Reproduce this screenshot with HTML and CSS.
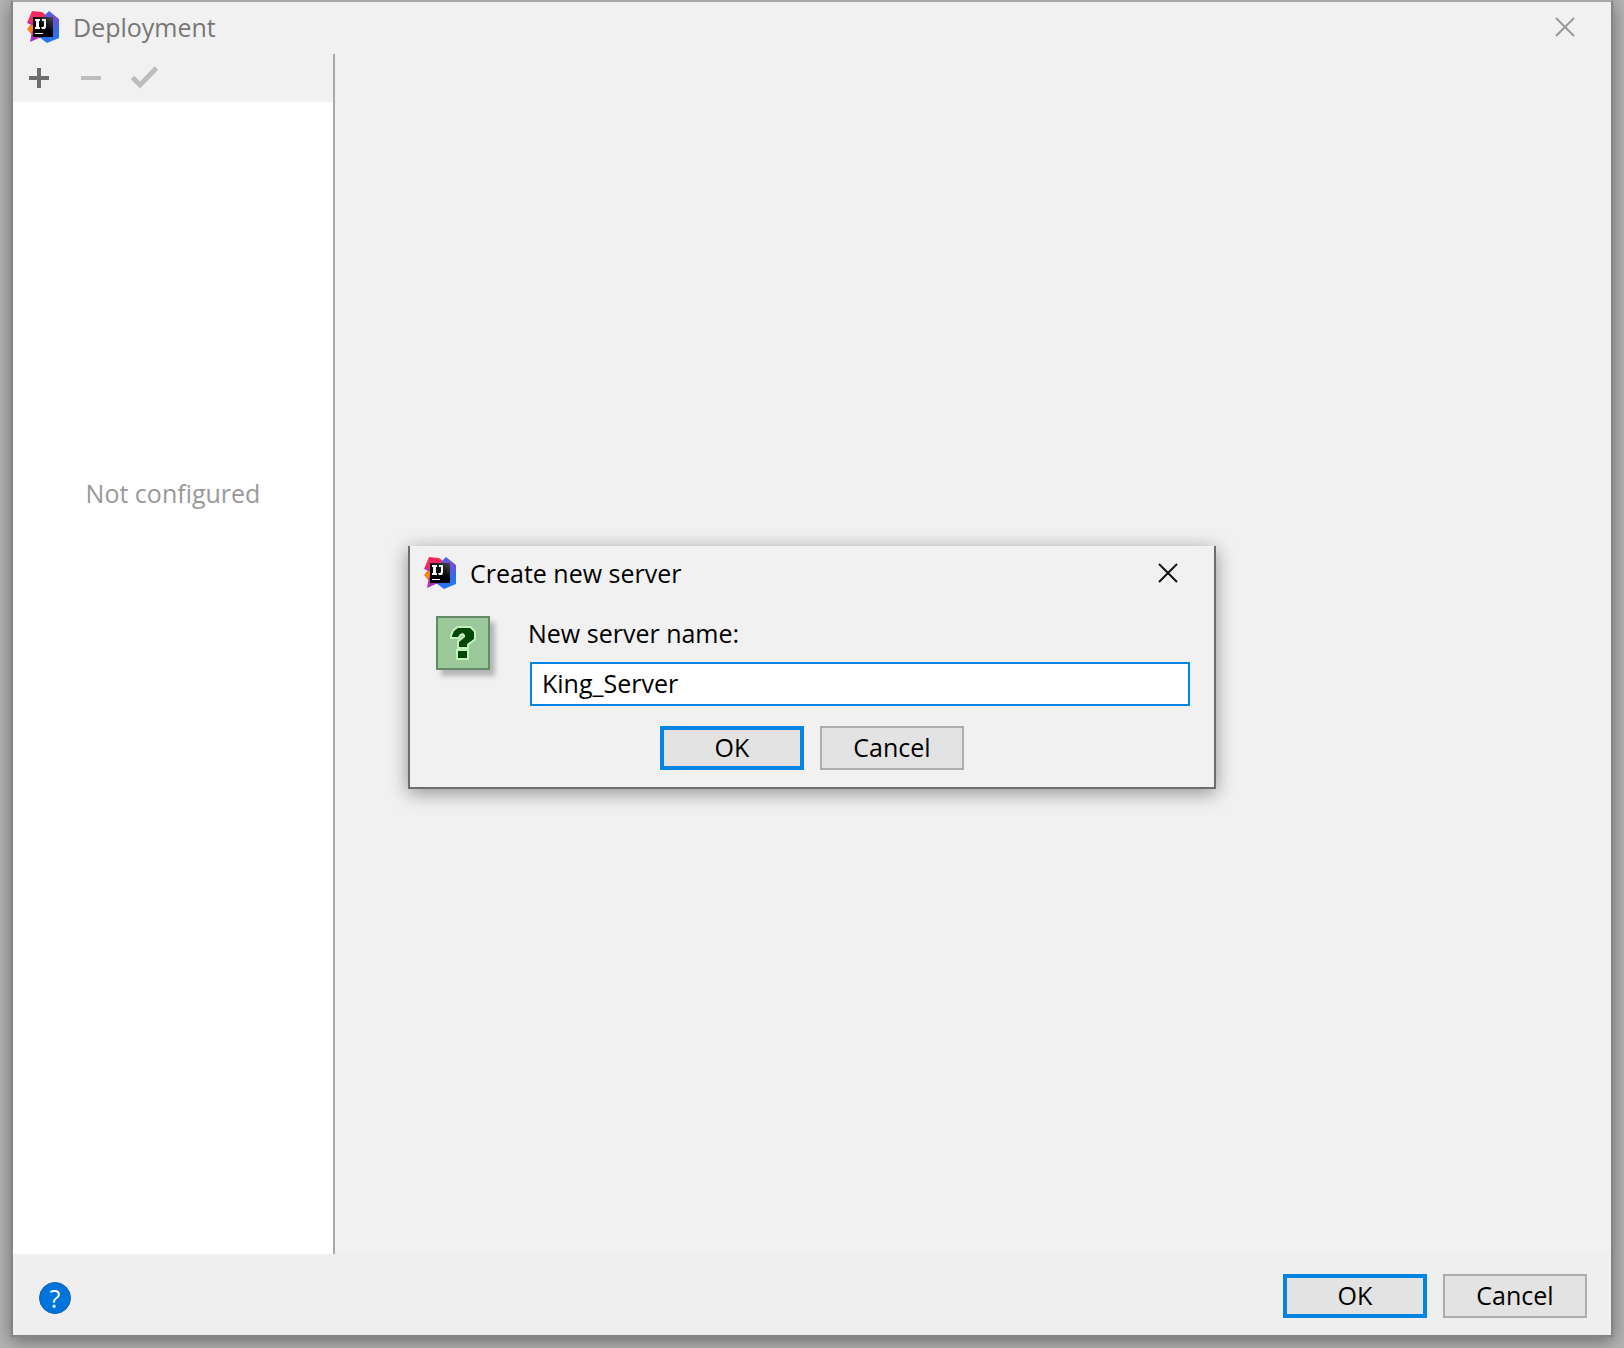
FILE: index.html
```html
<!DOCTYPE html>
<html lang="en">
<head>
<meta charset="utf-8">
<meta name="viewport" content="width=device-width, initial-scale=1">
<title>Deployment</title>
<link rel="stylesheet" href="styles.css">
</head>
<body>
<svg class="defs" aria-hidden="true">
  <defs>
    <linearGradient id="red" x1="0" y1="0" x2="0" y2="1"><stop offset="0" stop-color="#fe2857"/><stop offset="0.65" stop-color="#f0286a"/><stop offset="1" stop-color="#9a35c8"/></linearGradient>
    <linearGradient id="blue" x1="0.2" y1="0" x2="0.5" y2="1"><stop offset="0" stop-color="#2f6cf0"/><stop offset="0.35" stop-color="#7a4cd8"/><stop offset="0.7" stop-color="#3767ea"/><stop offset="1" stop-color="#1f7cf0"/></linearGradient>
    <linearGradient id="purple" x1="0" y1="1" x2="1" y2="0.4"><stop offset="0" stop-color="#9039d8"/><stop offset="0.5" stop-color="#c02fa0"/><stop offset="1" stop-color="#fe2857"/></linearGradient>
    <linearGradient id="black" x1="1" y1="0" x2="0.6" y2="0.6"><stop offset="0" stop-color="#4a4a4a"/><stop offset="1" stop-color="#000"/></linearGradient>
    <symbol id="logo" viewBox="0 0 32 32">
      <path d="M0 18 4 13 8 16 7 24 4 23Z" fill="#fc801d"/>
      <path d="M5 0 15 1 20 5 19 9 7 15 0 12Z" fill="url(#red)"/>
      <path d="M5 20 16 24 20 27 12 27 3 31Z" fill="url(#purple)"/>
      <path d="M22 0 32 8 32 27 20 32 12 26 18 4Z" fill="url(#blue)"/>
      <path d="M6 6h20v20H6z" fill="url(#black)"/>
      <path d="M8 8h5v2h-1v6h1v2H8v-2h1v-6H8zM15 8h4v8l-1 2h-3l-1-2h2l1-1v-5h-2zM8 22h8v1H8z" fill="#fff"/>
    </symbol>
  </defs>
</svg>
<main class="window">
  <header class="titlebar">
    <svg class="logo" aria-hidden="true"><use href="#logo"/></svg>
    <h1 class="title">Deployment</h1>
    <button class="close" type="button" aria-label="Close"><svg viewBox="0 0 20 20"><path d="M1 1 19 19M19 1 1 19"/></svg></button>
  </header>
  <div class="content">
    <aside class="sidebar">
      <div class="toolbar">
        <button class="tool add" type="button" aria-label="Add"><svg viewBox="0 0 28 28"><path d="M4 14h20M14 4v20"/></svg></button>
        <button class="tool" type="button" aria-label="Remove" disabled><svg viewBox="0 0 28 28"><path d="M4 14h20"/></svg></button>
        <button class="tool" type="button" aria-label="Use as default" disabled><svg viewBox="0 0 28 28"><path d="M2.500 13.500 10 21 26.500 4" stroke-width="5"/></svg></button>
      </div>
      <div class="servers"><p class="empty">Not configured</p></div>
    </aside>
    <section class="details" aria-label="Server settings"></section>
  </div>
  <footer class="footer">
    <button class="help" type="button" aria-label="Help">?</button>
    <div class="actions">
      <button class="button primary" type="button">OK</button>
      <button class="button" type="button">Cancel</button>
    </div>
  </footer>
</main>
<form class="dialog" role="dialog" aria-labelledby="dialog-title">
  <header class="titlebar">
    <svg class="logo" aria-hidden="true"><use href="#logo"/></svg>
    <h2 class="title" id="dialog-title">Create new server</h2>
    <button class="close" type="button" aria-label="Close"><svg viewBox="0 0 20 20"><path d="M1 1 19 19M19 1 1 19"/></svg></button>
  </header>
  <div class="prompt">
    <svg class="question" viewBox="0 0 54 54" aria-hidden="true">
      <path d="M1 1h52v52H1z" fill="#9bc898" stroke="#668a68" stroke-width="2"/>
      <path class="mark" d="M16 20 18 15 22 12H34L38 16V23L31 28V31H23V26L29 21V19L27 17 24 18 22 21H16ZM22 35h9v7h-9z"/>
    </svg>
    <div class="field">
      <label for="server-name">New server name:</label>
      <input id="server-name" type="text" value="King_Server">
    </div>
  </div>
  <div class="actions centered">
    <button class="button primary" type="submit">OK</button>
    <button class="button" type="button">Cancel</button>
  </div>
</form>
</body>
</html>
```
FILE: styles.css
```css
* { box-sizing: border-box; }
body {
  margin: 0;
  min-height: 100vh;
  display: flex;
  padding: 0 11px 11px;
  background: #b3b3b3;
  color: #000;
  font: 25px/34px "Open Sans", "Noto Sans", sans-serif;
}
button, input { font: inherit; color: inherit; }
button { margin: 0; padding: 0; }
svg { display: block; }
.defs { position: absolute; width: 0; height: 0; }
.window {
  flex: 1;
  display: flex;
  flex-direction: column;
  border: 2px solid #858585;
  border-top-color: #a8a8a8;
  background: #f1f1f1;
  box-shadow: 0 4px 16px rgba(0, 0, 0, 0.4);
}
.titlebar {
  display: flex;
  align-items: center;
  height: 52px;
  padding: 0 36px 0 14px;
}
.window .titlebar { padding-bottom: 2px; }
.dialog .titlebar { padding-top: 2px; }
.logo { width: 32px; height: 32px; }
.title { flex: 1; margin: 0 0 0 14px; font-size: 25px; font-weight: 400; }
.window .title { color: #777; }
.close { border: 0; background: none; }
.close svg { width: 20px; height: 20px; fill: none; stroke: #111; stroke-width: 2; }
.window .close svg { stroke: #999; }
.content { flex: 1; display: flex; }
.sidebar { width: 322px; display: flex; flex-direction: column; border-right: 2px solid #a9a9a9; }
.toolbar { display: flex; gap: 24px; height: 48px; padding: 10px 12px; }
.tool { border: 0; background: none; color: #bdbdbd; }
.tool svg { width: 28px; height: 28px; fill: none; stroke: currentColor; stroke-width: 4; }
.tool:last-child { margin-left: 1px; }
.add { color: #6e6e6e; }
.servers { flex: 1; padding-top: 374px; background: #fff; }
.empty { margin: 0; text-align: center; color: #999; }
.details { flex: 1; }
.footer {
  display: flex;
  align-items: center;
  justify-content: space-between;
  height: 81px;
  padding: 3px 24px 0 26px;
  background: #efefef;
}
.help {
  width: 32px;
  height: 32px;
  margin-top: 4px;
  border: 1px solid #1262ad;
  border-radius: 50%;
  background: #0074dd;
  color: #fff;
  line-height: 28px;
}
.actions { display: flex; gap: 16px; }
.centered { justify-content: center; }
.button {
  width: 144px;
  height: 44px;
  padding-bottom: 2px;
  border: 2px solid #adadad;
  background: #e3e3e3;
}
.primary { border: 4px solid #0585e1; }
.dialog {
  position: absolute;
  top: 546px;
  left: 50%;
  width: 808px;
  transform: translateX(-50%);
  padding-bottom: 17px;
  border: 2px solid #6d6d6d;
  border-top: 0;
  background: #f1f1f1;
  box-shadow: 0 4px 18px rgba(0, 0, 0, 0.4);
}
.prompt { display: flex; gap: 40px; padding: 18px 24px 20px 26px; }
.question { width: 54px; height: 54px; box-shadow: 5px 6px 5px rgba(0, 0, 0, 0.25); }
.mark { fill: #044604; stroke: #c3f3bd; stroke-width: 4; paint-order: stroke; }
.field { flex: 1; display: flex; flex-direction: column; gap: 12px; }
.field label { margin-left: -2px; }
.field input {
  width: 100%;
  height: 44px;
  padding: 0 10px 2px;
  border: 2px solid #0585e1;
  border-radius: 0;
  outline: 0;
  background: #fff;
}
```
